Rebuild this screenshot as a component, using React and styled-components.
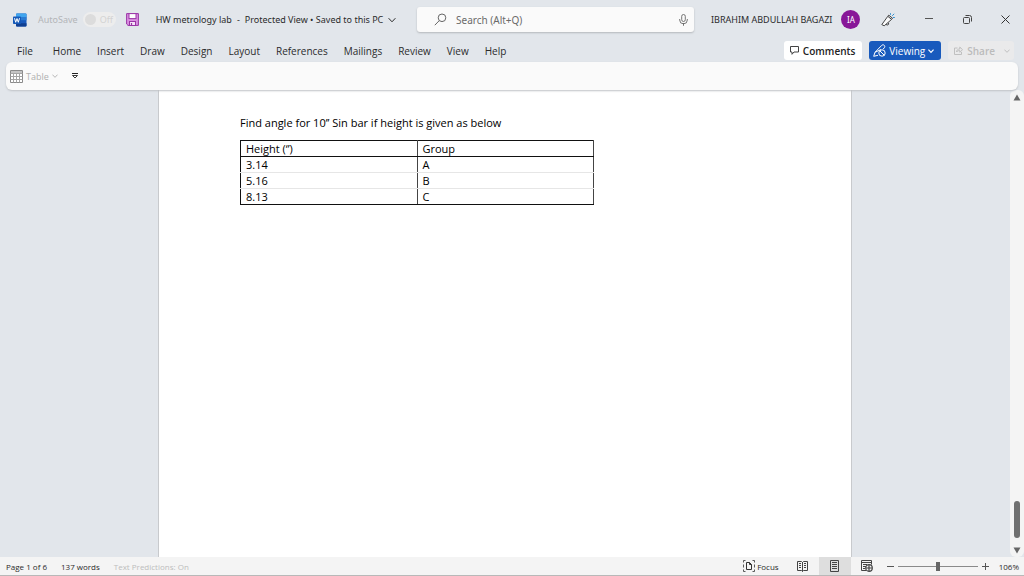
import styled, { createGlobalStyle } from "styled-components";
import { useState } from "react";

const tabs = [
  "File",
  "Home",
  "Insert",
  "Draw",
  "Design",
  "Layout",
  "References",
  "Mailings",
  "Review",
  "View",
  "Help",
];

const rows = [
  { height: "3.14", group: "A" },
  { height: "5.16", group: "B" },
  { height: "8.13", group: "C" },
];

const Chevron = ({ size = 6, width = 1.2 }) => (
  <svg width={size} height={size} viewBox="0 0 8 8" aria-hidden="true">
    <path d="M0.6 2.2 4 5.8 7.4 2.2" fill="none" stroke="currentColor" strokeWidth={width} />
  </svg>
);

const WordLogo = () => (
  <svg width="14" height="14" viewBox="0 0 14 14" aria-hidden="true">
    <rect x="3" y="0.5" width="10.5" height="13" rx="1" fill="#185abd" />
    <path d="M4 0.5h8.5a1 1 0 0 1 1 1V4H3V1.5a1 1 0 0 1 1-1z" fill="#41a5ee" />
    <path d="M3 4h10.5v3.2H3z" fill="#2b7cd3" />
    <path d="M3 10.3h10.5v2.2a1 1 0 0 1-1 1H4a1 1 0 0 1-1-1z" fill="#103f91" />
    <rect x="0" y="3.5" width="8" height="7.5" rx="0.8" fill="#1459b8" />
    <path d="M1.5 5.2 2.7 9.3 4 5.5 5.3 9.3 6.5 5.2" fill="none" stroke="#fff" strokeWidth="1" />
  </svg>
);

const SaveIcon = () => (
  <svg width="13" height="13" viewBox="0 0 13 13" aria-hidden="true">
    <path d="M0.6 0.6h11.8v11.8H2L0.6 11z" fill="#d98fe0" stroke="#9a35a6" strokeWidth="1" />
    <rect x="3" y="0.6" width="7" height="5" fill="#fff" stroke="#9a35a6" />
    <rect x="3.5" y="8.5" width="6" height="4" fill="#f6e3f8" stroke="#9a35a6" />
    <path d="M5.5 10v2.5" stroke="#9a35a6" strokeWidth="1.2" />
  </svg>
);

const SearchIcon = () => (
  <svg width="13" height="13" viewBox="0 0 13 13" fill="none" stroke="#666" aria-hidden="true">
    <circle cx="8" cy="4.8" r="3.8" />
    <path d="M5.2 7.7 0.8 12.2" />
  </svg>
);

const MicIcon = () => (
  <svg width="9" height="12" viewBox="0 0 9 12" fill="none" stroke="#666" strokeWidth="0.9" aria-hidden="true">
    <rect x="2.7" y="0.5" width="3.6" height="7" rx="1.8" />
    <path d="M0.7 5v1a3.3 3.3 0 0 0 7.6 0V5M4.5 9v2.8" />
  </svg>
);

const PenIcon = () => (
  <svg width="14" height="14" viewBox="0 0 14 14" fill="none" stroke="#444" aria-hidden="true">
    <path d="M.8 11.6 6.8 3.3 10.6 6.4 3.2 12.8z" fill="#fafafa" />
    <path d="M6.800 3.300 7.800 2.200l3.700 3-.9 1.200M5 11.300c1.200 1.500 3 .8 2.600-1.500" />
    <path d="M9.500 1.800V.2M11.200 2.800 13.200.8M12 4.500h1.800" stroke="#2f8fd0" />
  </svg>
);

const CommentIcon = () => (
  <svg width="9" height="9" viewBox="0 0 9 9" fill="none" stroke="#444" aria-hidden="true">
    <path d="M.5.5h8v5.500H4L2 8.300V6H.5z" />
  </svg>
);

const ViewingIcon = () => (
  <svg width="13" height="13" viewBox="0 0 13 13" fill="none" stroke="#fff" aria-hidden="true">
    <path d="M5 11.300.7 12.300 2 8.300 8.800 1.300c1.700-1.500 4 .7 2.500 2.500L10 5.200M2 8.300l6-2.800" />
    <circle cx="9" cy="9" r="3.200" />
    <path d="m6.800 6.800 4.500 4.500" />
  </svg>
);

const ShareIcon = () => (
  <svg width="9" height="9" viewBox="0 0 9 9" fill="none" stroke="currentColor" strokeWidth="0.9" aria-hidden="true">
    <path d="M3.500 2H.5v6.500h7V6" />
    <path d="M2.500 6c.2-2 1.300-3 3.300-3V1l2.700 2.700-2.700 2.600V4.600C4.300 4.500 3.300 5 2.500 6z" />
  </svg>
);

const TableIcon = () => (
  <svg width="13" height="13" viewBox="0 0 13 13" fill="none" aria-hidden="true">
    <path d="M.5.5h12v12H.5z" fill="#fff" stroke="#8a8a8a" />
    <path d="M1 1h11v2H1z" fill="#c4c4c4" />
    <path d="M.5 3.500h12M.5 6.500h12M.5 9.500h12M3.500 3.500v9M6.500 3.500v9M9.500 3.500v9" stroke="#a5a5a5" />
  </svg>
);

const CustomizeIcon = () => (
  <svg width="6" height="6" viewBox="0 0 6 6" aria-hidden="true">
    <path d="M0 .5h6" stroke="#222" />
    <path d="M.5 2.500h5L3 5z" fill="#fff" stroke="#222" strokeWidth="0.9" />
  </svg>
);

const FocusIcon = () => (
  <svg width="12" height="12" viewBox="0 0 12 12" fill="none" stroke="#333" aria-hidden="true">
    <path d="M3.500 2.500h3l2 2v5h-5zM6.500 2.500v2h2" />
    <path d="M2.500.5h-2v2M9.500.5h2v2M.5 9.500v2h2M11.500 9.500v2h-2M.5 4.500v3M11.500 4.500v3" strokeWidth="0.8" />
  </svg>
);

const ReadIcon = () => (
  <svg width="11" height="11" viewBox="0 0 11 11" fill="none" stroke="#444" aria-hidden="true">
    <path d="M.5.5h4l1 1 1-1h4v9h-4l-1 1-1-1h-4zM5.500 1v9.500" />
    <path d="M2 2.500h2M2 4.500h2M2 6.500h2M7 2.500h2M7 4.500h2M7 6.500h2" />
  </svg>
);

const PrintIcon = () => (
  <svg width="9" height="12" viewBox="0 0 9 12" fill="none" stroke="#444" aria-hidden="true">
    <path d="M.5.5h8v11h-8z" />
    <path d="M2 2.500h5M2 4.500h5M2 6.500h5M2 8.500h5" />
  </svg>
);

const WebIcon = () => (
  <svg width="12" height="12" viewBox="0 0 12 12" fill="none" stroke="#444" aria-hidden="true">
    <path d="M5 10.500H.5V.5h10v4M.5 2.500h10M2 4.500h4M2 6.500h3M2 8.500h2" />
    <circle cx="8" cy="8" r="3.3" fill="#f4f4f4" strokeWidth="1.2" />
    <path d="M8 5v6M5 8h6" strokeWidth="1.2" />
  </svg>
);

const TitleBar = () => (
  <StyledTitleBar>
    <div className="left">
      <WordLogo />
      <AutoSave>
        AutoSave
        <input type="checkbox" disabled />
        <span className="track">Off</span>
      </AutoSave>
      <IconButton aria-label="Save">
        <SaveIcon />
      </IconButton>
      <DocName>
        <span>HW metrology lab</span>
        <span>-</span>
        <span>Protected View • Saved to this PC</span>
        <Chevron size={8} width={1} />
      </DocName>
    </div>
    <SearchBox>
      <SearchIcon />
      <input type="search" aria-label="Search" placeholder="Search (Alt+Q)" />
      <IconButton aria-label="Dictate">
        <MicIcon />
      </IconButton>
    </SearchBox>
    <div className="right">
      <UserName>IBRAHIM ABDULLAH BAGAZI</UserName>
      <Avatar>IA</Avatar>
      <WindowButtons>
        <IconButton aria-label="Draw">
          <PenIcon />
        </IconButton>
        <IconButton aria-label="Minimize">
          <svg width="9" height="9" viewBox="0 0 9 9">
            <path d="M0 3.500h8" stroke="#555" />
          </svg>
        </IconButton>
        <IconButton aria-label="Restore">
          <svg width="9" height="9" viewBox="0 0 9 9" fill="none" stroke="#444">
            <rect x=".5" y="2.500" width="6" height="6" rx="1" />
            <path d="M2.500.5h4a2 2 0 0 1 2 2v4" />
          </svg>
        </IconButton>
        <IconButton aria-label="Close">
          <svg width="9" height="9" viewBox="0 0 9 9" stroke="#333">
            <path d="m.5.5 8 8m0-8-8 8" />
          </svg>
        </IconButton>
      </WindowButtons>
    </div>
  </StyledTitleBar>
);

const Document = () => (
  <Workspace>
    <Page>
      <p>Find angle for 10’’ Sin bar if height is given as below</p>
      <DataTable>
        <thead>
          <tr>
            <th>Height (‘’)</th>
            <th>Group</th>
          </tr>
        </thead>
        <tbody>
          {rows.map((row) => (
            <tr key={row.group}>
              <td>{row.height}</td>
              <td>{row.group}</td>
            </tr>
          ))}
        </tbody>
      </DataTable>
    </Page>
    <ScrollBar>
      <IconButton aria-label="Scroll up">
        <svg width="8" height="7" viewBox="0 0 8 7">
          <path d="M4 .5 7.500 6.500h-7z" fill="#666" />
        </svg>
      </IconButton>
      <div className="thumb" />
      <IconButton aria-label="Scroll down">
        <svg width="8" height="7" viewBox="0 0 8 7">
          <path d="M4 6.500 7.500.5h-7z" fill="#666" />
        </svg>
      </IconButton>
    </ScrollBar>
  </Workspace>
);

const StatusBar = () => {
  const [zoom, setZoom] = useState(106);
  return (
    <StyledStatusBar>
      <div className="info">
        <span>Page 1 of 6</span>
        <span>137 words</span>
        <span className="muted">Text Predictions: On</span>
      </div>
      <ViewButton>
        <FocusIcon />
        Focus
      </ViewButton>
      <ViewButton aria-label="Read Mode">
        <ReadIcon />
      </ViewButton>
      <ViewButton aria-label="Print Layout" $active>
        <PrintIcon />
      </ViewButton>
      <ViewButton aria-label="Web Layout">
        <WebIcon />
      </ViewButton>
      <ZoomControl>
        <IconButton aria-label="Zoom out" onClick={() => setZoom(zoom - 10)}>
          <svg width="7" height="7" viewBox="0 0 7 7" stroke="#555">
            <path d="M0 3.500h7" />
          </svg>
        </IconButton>
        <input
          type="range"
          aria-label="Zoom"
          min="10"
          max="200"
          value={zoom}
          onChange={(e) => setZoom(Number(e.target.value))}
        />
        <IconButton aria-label="Zoom in" onClick={() => setZoom(zoom + 10)}>
          <svg width="7" height="7" viewBox="0 0 7 7" stroke="#555">
            <path d="M0 3.500h7M3.500 0v7" />
          </svg>
        </IconButton>
        <span>{zoom}%</span>
      </ZoomControl>
    </StyledStatusBar>
  );
};

const App = () => {
  return (
    <Window>
      <GlobalStyle />
      <TitleBar />
      <Ribbon>
        <nav>
          {tabs.map((tab) => (
            <Tab key={tab}>{tab}</Tab>
          ))}
        </nav>
        <RibbonButton>
          <CommentIcon />
          Comments
        </RibbonButton>
        <RibbonButton $variant="primary">
          <ViewingIcon />
          Viewing
          <Chevron width={1.6} />
        </RibbonButton>
        <RibbonButton $variant="disabled" disabled>
          <ShareIcon />
          Share
          <Chevron />
        </RibbonButton>
      </Ribbon>
      <Toolbar>
        <TableButton disabled>
          <TableIcon />
          Table
          <Chevron />
        </TableButton>
        <IconButton aria-label="Customize toolbar">
          <CustomizeIcon />
        </IconButton>
      </Toolbar>
      <Document />
      <StatusBar />
    </Window>
  );
};

const GlobalStyle = createGlobalStyle`
  * {
    box-sizing: border-box;
  }
  body {
    margin: 0;
    background: #e2e6eb;
    color: #2b2b2b;
    font-family: "Open Sans", "Noto Sans", sans-serif;
    font-size: 10px;
  }
  button,
  input {
    font: inherit;
    color: inherit;
  }
  svg {
    display: block;
    flex-shrink: 0;
  }
`;

const Window = styled.div`
  display: flex;
  flex-direction: column;
  min-height: 100vh;
`;

const IconButton = styled.button`
  display: flex;
  align-items: center;
  justify-content: center;
  padding: 0;
  border: none;
  background: none;
`;

const StyledTitleBar = styled.header`
  display: grid;
  grid-template-columns: 417px minmax(0, 1fr) 330px;
  align-items: center;
  height: 39px;
  font-family: "Noto Sans", "Open Sans", sans-serif;
  white-space: nowrap;
  .left {
    display: flex;
    align-items: center;
    padding-left: 13px;
  }
  .right {
    display: flex;
    align-items: center;
    padding: 0 14px 0 17px;
  }
`;

const AutoSave = styled.label`
  display: flex;
  align-items: center;
  gap: 5px;
  margin: 0 10px 0 11px;
  color: #b3b5b8;
  font-size: 9px;
  input {
    position: absolute;
    opacity: 0;
  }
  .track {
    display: flex;
    align-items: center;
    gap: 4px;
    width: 33px;
    height: 15px;
    padding-left: 2px;
    border-radius: 8px;
    background: #ededed;
    color: #d3d3d3;
  }
  .track::before {
    content: "";
    width: 11px;
    height: 11px;
    border-radius: 50%;
    background: #dcdcdc;
  }
`;

const DocName = styled.div`
  display: flex;
  align-items: center;
  gap: 5px;
  margin-left: 17px;
  font-size: 9px;
`;

const SearchBox = styled.div`
  display: flex;
  align-items: center;
  gap: 9px;
  height: 25px;
  padding: 0 6px 0 17px;
  border-radius: 3px;
  background: #fafafa;
  box-shadow: 0 1px 2px #b4b7bb;
  input {
    flex: 1;
    min-width: 0;
    padding: 0;
    border: none;
    outline: none;
    background: none;
  }
  input::placeholder {
    color: #6a6a6a;
  }
`;

const UserName = styled.span`
  font-size: 9px;
`;

const Avatar = styled.span`
  display: flex;
  align-items: center;
  justify-content: center;
  flex-shrink: 0;
  width: 19px;
  height: 19px;
  margin-left: 9px;
  border-radius: 50%;
  background: #881798;
  color: #fff;
  font-size: 8px;
`;

const WindowButtons = styled.div`
  display: flex;
  flex: 1;
  justify-content: space-between;
  align-items: center;
  margin-left: 21px;
`;

const Ribbon = styled.div`
  display: flex;
  align-items: center;
  gap: 7px;
  height: 23px;
  padding: 0 10px 0 17px;
  nav {
    display: flex;
    flex: 1;
    gap: 16px;
  }
`;

const Tab = styled.button`
  padding: 0;
  border: none;
  background: none;
  font-size: 10px;
  &:first-child {
    margin-right: 4px;
  }
`;

const variants = {
  plain: "background: #fff; color: #222; font-weight: 600;",
  primary: "background: #185abd; color: #fff;",
  disabled: "background: #eaeaeb; color: #bbb; font-weight: 600;",
};

const RibbonButton = styled.button`
  display: flex;
  align-items: center;
  gap: 4px;
  height: 19px;
  padding: 0 7px 0 6px;
  border: none;
  border-radius: 3px;
  font-size: 10px;
  ${({ $variant = "plain" }) => variants[$variant]}
  ${({ $variant }) => $variant === "primary" && "padding: 0 7px 0 4px; gap: 3px;"}
  ${({ $variant }) => $variant === "disabled" && "padding: 0 4px 0 6px; svg:last-child { margin-left: 5px; }"}
`;

const Toolbar = styled.div`
  display: flex;
  align-items: center;
  gap: 14px;
  z-index: 1;
  height: 28px;
  margin: 0 6px;
  padding: 0 4px;
  border-radius: 6px;
  background: #fafafa;
  box-shadow: 0 1px 2px #bfc2c6;
`;

const TableButton = styled.button`
  display: flex;
  align-items: center;
  gap: 3px;
  padding: 0;
  border: none;
  background: none;
  color: #b0b0b0;
  font-size: 9px;
`;

const Workspace = styled.main`
  display: flex;
  flex: 1;
`;

const Page = styled.article`
  width: 100%;
  max-width: 694px;
  margin: 0 auto;
  padding: 24px 81px;
  border: solid #c8cacd;
  border-width: 0 1px;
  background: #fff;
  color: #000;
  font-size: 11px;
  p {
    margin: 0 0 9px;
    line-height: 17px;
  }
`;

const DataTable = styled.table`
  width: 354px;
  max-width: 100%;
  table-layout: fixed;
  border: 1px solid #111;
  border-collapse: collapse;
  line-height: 15px;
  th,
  td {
    padding: 0 5px;
    border-right: 1px solid #444;
    border-bottom: 1px solid #e6e6e6;
    font-weight: 400;
    text-align: left;
  }
  th,
  tr:last-child td {
    border-bottom-color: #111;
  }
`;

const ScrollBar = styled.div`
  display: flex;
  flex-direction: column;
  align-items: center;
  width: 14px;
  padding: 4px 0 3px;
  border-radius: 6px;
  background: #f4f4f4;
  .thumb {
    width: 6px;
    height: 37px;
    margin: auto 0 9px;
    border-radius: 3px;
    background: #707070;
  }
`;

const StyledStatusBar = styled.footer`
  display: flex;
  align-items: center;
  height: 19px;
  padding: 0 5px 0 6px;
  border-bottom: 1px solid #b8b8b8;
  background: #f4f4f4;
  font-size: 8px;
  white-space: nowrap;
  .info {
    display: flex;
    flex: 1;
    gap: 14px;
  }
  .muted {
    color: #bdbdbd;
  }
`;

const ViewButton = styled.button`
  display: flex;
  align-items: center;
  justify-content: center;
  gap: 2px;
  min-width: 32px;
  height: 18px;
  padding: 0 8px;
  border: none;
  background: ${({ $active }) => ($active ? "#dedede" : "none")};
`;

const ZoomControl = styled.div`
  display: flex;
  align-items: center;
  gap: 4px;
  margin-left: 4px;
  input {
    appearance: none;
    width: 80px;
    height: 9px;
    margin: 0;
    background: linear-gradient(#8a8a8a, #8a8a8a) center / 100% 1px no-repeat;
  }
  input::-webkit-slider-thumb {
    appearance: none;
    width: 4px;
    height: 9px;
    background: #666;
  }
  span {
    margin-left: 6px;
  }
`;

export default App;
